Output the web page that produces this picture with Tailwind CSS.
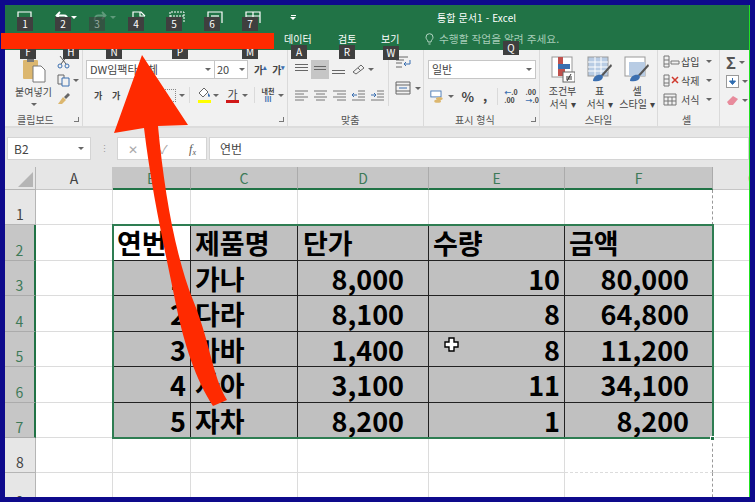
<!DOCTYPE html>
<html lang="ko">
<head>
  <meta charset="UTF-8">
  <title>통합 문서1 - Excel</title>
  <script src="https://cdn.jsdelivr.net/npm/@tailwindcss/browser@4"></script>
</head>
<body class="w-[755px] h-[502px] overflow-hidden bg-[#0e0a8c] font-['Noto_Sans_CJK_KR',sans-serif] text-[#444]">
<div class="relative w-[755px] h-[502px] pl-[5px] pt-[5px] pb-[5px] pr-[5px]">
  <div class="w-[745px] h-[492px] flex flex-col bg-white border-r border-[#22e022] overflow-hidden">

    <!-- Title bar -->
    <header class="h-[45px] shrink-0 bg-[#217346] text-white relative">
      <div class="flex items-start pt-[6px] h-[20px]">
        <svg class="ml-[12px] w-4 h-[12px]" viewBox="0 0 16 12" fill="none" stroke="#fff" stroke-width="1.2"><path d="M1 12V1h13v11"/></svg>
        <svg class="ml-[22px] w-[14px] h-[11px]" viewBox="0 0 14 11" fill="none" stroke="#fff" stroke-width="1.8"><path d="M5 1 1.500 4.500 5 8M2 4.500h7c2.500 0 3.500 2 3.500 5"/></svg>
        <span class="ml-[2px] mt-[5px] w-0 h-0 border-x-[3px] border-x-transparent border-t-[3px] border-t-white"></span>
        <svg class="ml-[16px] w-[14px] h-[11px]" viewBox="0 0 14 11" fill="none" stroke="#5f9a7b" stroke-width="1.8"><path d="M9 1l3.500 3.500L9 8M12 4.500H5c-2.500 0-3.500 2-3.500 5"/></svg>
        <span class="ml-[3px] mt-[5px] w-0 h-0 border-x-[3px] border-x-transparent border-t-[3px] border-t-[#5f9a7b]"></span>
        <svg class="ml-[15px] w-4 h-[12px]" viewBox="0 0 16 12" fill="none" stroke="#fff" stroke-width="1.2"><path d="M2 12V1h8l4 4"/><path d="M9 1v4h5"/></svg>
        <svg class="ml-[22px] w-4 h-[12px]" viewBox="0 0 16 12" fill="none" stroke="#fff" stroke-width="1" stroke-dasharray="2 1"><path d="M1 12V1h14v11"/><path d="M1 5h14"/></svg>
        <svg class="ml-[22px] w-4 h-[12px]" viewBox="0 0 16 12" fill="none" stroke="#fff" stroke-width="1.2"><path d="M1 12V1h14v11"/><path d="M4 5h8"/></svg>
        <svg class="ml-[22px] w-4 h-[12px]" viewBox="0 0 16 12" fill="none" stroke="#fff" stroke-width="1.2"><path d="M1 12V1h14v11M8 1v11M1 5h14"/></svg>
        <span class="ml-[29px] mt-[4px] flex flex-col items-center gap-[1px]"><span class="w-[5px] h-px bg-white"></span><span class="w-0 h-0 border-x-[3px] border-x-transparent border-t-[3px] border-t-white"></span></span>
        <span class="ml-[141px] text-[10px] tracking-[0.1px] leading-[13px] whitespace-nowrap">통합 문서1 - Excel</span>
      </div>
      <nav class="flex items-center h-[25px] pl-[279px] text-[10px] leading-[14px] pt-[3px]">
        <span class="w-[54px]">데이터</span>
        <span class="w-[43px]">검토</span>
        <span class="w-[44px]">보기</span>
        <svg class="w-[9px] h-[13px] mr-[5px]" viewBox="0 0 9 13" fill="none" stroke="#b5d6c4"><path d="M3 9C3 7 1 6.500 1 4.200a3.500 3.500 0 0 1 7 0C8 6.500 6 7 6 9ZM3.500 11h2"/></svg>
        <span class="text-[#a6cdb8] text-[10.7px] whitespace-nowrap">수행할 작업을 알려 주세요.</span>
      </nav>
    </header>

    <!-- Ribbon -->
    <section class="h-[78px] shrink-0 bg-[#f1f1f1] border-b-2 border-[#dcdcdc] flex text-[10px] leading-[13px]">
      <!-- Clipboard -->
      <div class="w-[78px] shrink-0 border-r border-[#dadada] flex flex-col">
        <div class="h-[64px] flex">
          <div class="w-[47px] flex flex-col items-center pl-[10px] pt-[9px]">
            <svg class="w-[24px] h-[24px]" viewBox="0 0 24 24"><rect x="1" y="1" width="15" height="19" rx="1" fill="#dcb76f"/><rect x="5" y="0" width="7" height="3" fill="#777"/><path d="M11 7h8l4 4v12H11Z" fill="#fff" stroke="#777"/></svg>
            <span class="whitespace-nowrap mt-[2px]">붙여넣기</span>
            <span class="mt-[5px] w-0 h-0 border-x-[3px] border-x-transparent border-t-[3px] border-t-[#666]"></span>
          </div>
          <div class="flex flex-col pl-[5px] pt-[5px] gap-[5px]">
            <svg class="w-[13px] h-[14px]" viewBox="0 0 13 14" fill="none" stroke="#555"><path d="M3 1l6 8M10 1 4 9"/><circle cx="3" cy="11" r="2" stroke="#3b6fb0"/><circle cx="10" cy="11" r="2" stroke="#3b6fb0"/></svg>
            <div class="flex items-center gap-[3px]">
              <svg class="w-[13px] h-[13px]" viewBox="0 0 13 13" fill="none" stroke="#666"><path d="M1 1h6v9H1Z"/><path d="M5 4h7v8H5Z" fill="#f1f1f1" stroke="#3b6fb0"/></svg>
              <span class="w-0 h-0 border-x-[3px] border-x-transparent border-t-[3px] border-t-[#666]"></span>
            </div>
            <svg class="w-[13px] h-[13px]" viewBox="0 0 13 13"><path d="M1 12 6 5l3 3-4 4Z" fill="#dcb76f"/><path d="M7 5l4-4 2 2-4 4Z" fill="#666"/></svg>
          </div>
        </div>
        <div class="flex items-center justify-between pl-[12px] pr-[3px] text-[#555]"><span>클립보드</span><span class="w-[5px] h-[5px] border-r border-b border-[#777]"></span></div>
      </div>
      <!-- Font -->
      <div class="w-[205px] shrink-0 border-r border-[#dadada] flex flex-col pl-[3px]">
        <div class="h-[64px] flex flex-col pt-[9px]">
          <div class="flex items-center h-[20px]">
            <div class="w-[129px] h-[19px] bg-white border border-[#c6c6c6] flex items-center justify-between px-[3px] text-[11px]"><span class="whitespace-nowrap">DW임팩타입체</span><span class="w-0 h-0 border-x-[3px] border-x-transparent border-t-[3px] border-t-[#666]"></span></div>
            <div class="w-[33px] h-[19px] bg-white border border-l-0 border-[#c6c6c6] flex items-center justify-between px-[2px] text-[11px]"><span>20</span><span class="w-0 h-0 border-x-[3px] border-x-transparent border-t-[3px] border-t-[#666]"></span></div>
            <span class="ml-[6px] font-bold">가<sup class="text-[#3b6fb0] text-[7px]">▴</sup></span>
            <span class="ml-[5px] font-bold">가<sup class="text-[#3b6fb0] text-[7px]">▾</sup></span>
          </div>
          <div class="flex items-center h-[20px] mt-[6px] text-[9px] font-bold">
            <span class="ml-[8px] w-[18px]">가</span><span class="w-[18px]">가</span><span class="w-[18px]">가</span>
            <span class="ml-[12px] w-[16px] h-[13px] border border-dotted border-[#888]"></span>
            <span class="ml-[3px] w-0 h-0 border-x-[3px] border-x-transparent border-t-[3px] border-t-[#666]"></span>
            <span class="ml-[4px] w-px h-[16px] bg-[#dadada]"></span>
            <svg class="ml-[8px] w-[13px] h-[16px]" viewBox="0 0 13 16"><path d="M6 1 1 6l4 4 5-5Z" fill="#fff" stroke="#666"/><path d="M10 6c1 1 2 2 2 3s-2 1-2 0Z" fill="#3b6fb0"/><rect y="13" width="13" height="3" fill="#ffff00"/></svg>
            <span class="ml-[2px] w-0 h-0 border-x-[3px] border-x-transparent border-t-[3px] border-t-[#666]"></span>
            <span class="ml-[7px] w-[13px] flex flex-col items-center text-[11px] leading-[12px] font-normal">가<span class="w-[13px] h-[3px] bg-[#d01818]"></span></span>
            <span class="ml-[3px] w-0 h-0 border-x-[3px] border-x-transparent border-t-[3px] border-t-[#666]"></span>
            <span class="ml-[6px] w-px h-[16px] bg-[#dadada]"></span>
            <span class="ml-[6px] w-[14px] text-[7px] leading-[8px] text-center whitespace-nowrap">내천<span class="block text-[#3b6fb0]">Ⅲ</span></span>
            <span class="ml-[3px] w-0 h-0 border-x-[3px] border-x-transparent border-t-[3px] border-t-[#666]"></span>
          </div>
        </div>
        <div class="flex items-center justify-end pr-[3px] text-[#555] h-[13px]"><span class="w-[5px] h-[5px] border-r border-b border-[#777]"></span></div>
      </div>
      <!-- Alignment -->
      <div class="w-[136px] shrink-0 border-r border-[#dadada] flex flex-col">
        <div class="h-[64px] flex">
          <div class="w-[100px] pl-[7px] pt-[9px] flex flex-col">
            <div class="flex items-center h-[20px]">
              <svg class="w-[13px] h-[12px] mr-[3px]" viewBox="0 0 13 12" stroke="#666"><path d="M0 1.500h13M0 4.500h13M0 7.500h13" fill="none"/></svg>
              <span class="w-[18px] h-[19px] bg-[#c6c6c6] flex items-center justify-center"><svg class="w-[12px] h-[8px]" viewBox="0 0 12 8" stroke="#666"><path d="M0 1.500h12M0 4.500h12"/></svg></span>
              <svg class="w-[13px] h-[12px] ml-[3px]" viewBox="0 0 13 12" stroke="#666"><path d="M0 7.500h13M0 10.500h13"/></svg>
              <svg class="w-[14px] h-[12px] ml-[7px]" viewBox="0 0 14 12" fill="none" stroke="#666"><path d="M1 9 9 2l3 3-8 6ZM6 5l3 3"/></svg>
              <span class="ml-[2px] w-0 h-0 border-x-[3px] border-x-transparent border-t-[3px] border-t-[#666]"></span>
            </div>
            <div class="flex items-center h-[20px] mt-[6px] gap-[6px]">
              <svg class="w-[13px] h-[11px]" viewBox="0 0 13 11" stroke="#777"><path d="M0 1h13M0 4h9M0 7h13M0 10h9"/></svg>
              <svg class="w-[13px] h-[11px]" viewBox="0 0 13 11" stroke="#777"><path d="M0 1h13M2 4h9M0 7h13M2 10h9"/></svg>
              <svg class="w-[13px] h-[11px]" viewBox="0 0 13 11" stroke="#777"><path d="M0 1h13M4 4h9M0 7h13M4 10h9"/></svg>
              <svg class="w-[13px] h-[11px]" viewBox="0 0 13 11" fill="none" stroke="#777"><path d="M6 1h7M6 4h7M6 7h7M0 10h13"/><path d="M5 5H0M2 3 0 5l2 2" stroke="#3b6fb0"/></svg>
              <svg class="w-[13px] h-[11px]" viewBox="0 0 13 11" fill="none" stroke="#777"><path d="M6 1h7M6 4h7M6 7h7M0 10h13"/><path d="M0 5h5M3 3l2 2-2 2" stroke="#3b6fb0"/></svg>
            </div>
          </div>
          <div class="border-l border-[#dadada] h-[50px] mt-[6px]"></div>
          <div class="pl-[6px] pt-[6px] flex flex-col gap-[12px]">
            <svg class="w-[16px] h-[13px]" viewBox="0 0 16 13" fill="none" stroke="#666"><path d="M1 1h12M1 4h8M1 7h6M1 11h6"/><path d="M15 4v4H9M11 6 9 8l2 2" stroke="#3b6fb0"/></svg>
            <div class="flex items-center gap-[4px]">
              <svg class="w-[16px] h-[14px]" viewBox="0 0 16 14" fill="none" stroke="#666"><path d="M1 1h14v12H1ZM1 4h14M1 10h14"/><path d="M4 7h8" stroke="#3b6fb0"/></svg>
              <span class="w-0 h-0 border-x-[3px] border-x-transparent border-t-[3px] border-t-[#666]"></span>
            </div>
          </div>
        </div>
        <div class="pl-[53px] text-[#555]">맞춤</div>
      </div>
      <!-- Number -->
      <div class="w-[116px] shrink-0 border-r border-[#dadada] flex flex-col pl-[4px]">
        <div class="h-[64px] flex flex-col pt-[10px]">
          <div class="w-[108px] h-[19px] bg-white border border-[#c6c6c6] flex items-center justify-between px-[3px] text-[11px]"><span>일반</span><span class="w-0 h-0 border-x-[3px] border-x-transparent border-t-[3px] border-t-[#666]"></span></div>
          <div class="flex items-center h-[20px] mt-[7px]">
            <svg class="ml-[2px] w-[16px] h-[15px]" viewBox="0 0 16 15"><rect x="1" y="1" width="12" height="7" fill="#fff" stroke="#3b6fb0"/><ellipse cx="11" cy="10" rx="4" ry="2" fill="#dcb76f"/><ellipse cx="9" cy="13" rx="4" ry="2" fill="#dcb76f"/></svg>
            <span class="ml-[4px] w-0 h-0 border-x-[3px] border-x-transparent border-t-[3px] border-t-[#666]"></span>
            <span class="ml-[8px] text-[13px] font-bold">%</span>
            <span class="ml-[9px] text-[13px] font-bold leading-[12px]">,</span>
            <span class="ml-[10px] w-px h-[17px] bg-[#dadada]"></span>
            <span class="ml-[6px] text-[7px] leading-[8px] font-bold whitespace-nowrap"><span class="text-[#3b6fb0]">←</span>.0<br>.00</span>
            <span class="ml-[8px] text-[7px] leading-[8px] font-bold whitespace-nowrap">.00<br><span class="text-[#3b6fb0]">→</span>.0</span>
          </div>
        </div>
        <div class="flex items-center justify-between pl-[27px] pr-[3px] text-[#555]"><span class="whitespace-nowrap">표시 형식</span><span class="w-[5px] h-[5px] border-r border-b border-[#777]"></span></div>
      </div>
      <!-- Styles -->
      <div class="w-[118px] shrink-0 border-r border-[#dadada] flex flex-col">
        <div class="h-[64px] flex pt-[6px] leading-[13px] text-center">
          <div class="w-[37px] ml-[4px] flex flex-col items-center">
            <svg class="w-[24px] h-[27px]" viewBox="0 0 24 27"><rect x="1" y="1" width="20" height="20" fill="#fff" stroke="#999"/><rect x="7" y="1" width="5" height="7" fill="#c0504d"/><rect x="7" y="8" width="12" height="5" fill="#3b6fb0"/><rect x="7" y="13" width="7" height="7" fill="#c0504d"/><rect x="12" y="16" width="12" height="10" fill="#fff" stroke="#666"/><path d="M15 21h6M15 23h6M20 18l-4 7" stroke="#333" fill="none"/></svg>
            <span class="mt-[1px] whitespace-nowrap">조건부</span><span class="whitespace-nowrap">서식 ▾</span>
          </div>
          <div class="w-[37px] flex flex-col items-center">
            <svg class="w-[26px] h-[27px]" viewBox="0 0 26 27"><rect x="1" y="1" width="20" height="19" fill="#b8cce4" stroke="#999"/><path d="M1 6h20M1 11h20M1 15h20M8 1v19M14 1v19" stroke="#fff"/><path d="M14 19 24 8l1 2-9 10Z" fill="#555"/><path d="M6 25c0-4 4-7 9-6l1 2c-1 4-5 5-10 4Z" fill="#3b6fb0"/></svg>
            <span class="mt-[1px]">표</span><span class="whitespace-nowrap">서식 ▾</span>
          </div>
          <div class="w-[38px] flex flex-col items-center">
            <svg class="w-[26px] h-[27px]" viewBox="0 0 26 27"><rect x="1" y="1" width="20" height="19" fill="#fff" stroke="#999"/><rect x="5" y="6" width="16" height="14" fill="#b8cce4"/><path d="M14 19 24 8l1 2-9 10Z" fill="#555"/><path d="M6 25c0-4 4-7 9-6l1 2c-1 4-5 5-10 4Z" fill="#3b6fb0"/></svg>
            <span class="mt-[1px]">셀</span><span class="whitespace-nowrap">스타일 ▾</span>
          </div>
        </div>
        <div class="text-center text-[#555]">스타일</div>
      </div>
      <!-- Cells -->
      <div class="w-[62px] shrink-0 border-r border-[#dadada] flex flex-col pl-[5px]">
        <div class="h-[64px] flex flex-col pt-[5px] gap-[6px]">
          <div class="flex items-center gap-[1px] whitespace-nowrap"><svg class="w-[17px] h-[13px]" viewBox="0 0 17 13" fill="none" stroke="#777"><path d="M1 1h5v11H1ZM1 5h5M1 9h5M8 6h8v3H8Z"/></svg>삽입<span class="ml-[6px] w-0 h-0 border-x-[3px] border-x-transparent border-t-[3px] border-t-[#666]"></span></div>
          <div class="flex items-center gap-[1px] whitespace-nowrap"><svg class="w-[17px] h-[13px]" viewBox="0 0 17 13" fill="none" stroke="#777"><path d="M1 1h5v11H1ZM1 5h5M1 9h5"/><path d="M9 3l6 6M15 3l-6 6" stroke="#d0382c" stroke-width="1.500"/></svg>삭제<span class="ml-[6px] w-0 h-0 border-x-[3px] border-x-transparent border-t-[3px] border-t-[#666]"></span></div>
          <div class="flex items-center gap-[1px] whitespace-nowrap"><svg class="w-[17px] h-[13px]" viewBox="0 0 17 13" fill="none" stroke="#777"><path d="M1 1h12v11H1ZM1 4h12M5 4v8M9 4v8M1 8h12"/></svg>서식<span class="ml-[6px] w-0 h-0 border-x-[3px] border-x-transparent border-t-[3px] border-t-[#666]"></span></div>
        </div>
        <div class="text-center pr-[9px] text-[#555]">셀</div>
      </div>
      <!-- Editing -->
      <div class="flex-1 flex flex-col pl-[6px] pt-[5px] gap-[6px] overflow-hidden">
        <div class="flex items-center gap-[3px]"><span class="text-[16px] leading-[14px] font-bold text-[#555]">Σ</span><span class="w-0 h-0 border-x-[3px] border-x-transparent border-t-[3px] border-t-[#666]"></span></div>
        <div class="flex items-center gap-[3px]"><svg class="w-[13px] h-[13px]" viewBox="0 0 13 13"><rect x=".5" y=".5" width="12" height="12" fill="#fff" stroke="#999"/><path d="M6.500 3v6M3.500 6l3 3.500 3-3.500Z" fill="#2f6cb0" stroke="#2f6cb0"/></svg><span class="w-0 h-0 border-x-[3px] border-x-transparent border-t-[3px] border-t-[#666]"></span></div>
        <div class="flex items-center gap-[3px]"><svg class="w-[13px] h-[12px]" viewBox="0 0 13 12"><path d="M1 8 7 2l5 3-5 6H3Z" fill="#e88b9c"/></svg><span class="w-0 h-0 border-x-[3px] border-x-transparent border-t-[3px] border-t-[#666]"></span></div>
      </div>
    </section>

    <!-- Formula bar -->
    <section class="h-[39px] shrink-0 bg-[#e6e6e6] flex items-center pl-[2px] pt-[2px] text-[12px]">
      <div class="w-[84px] h-[23px] bg-white border border-[#d4d4d4] flex items-center justify-between px-[6px]"><span>B2</span><span class="w-0 h-0 border-x-[3px] border-x-transparent border-t-[3px] border-t-[#666]"></span></div>
      <span class="w-[26px] text-center text-[#999] leading-[10px] text-[9px]">⋮</span>
      <div class="w-[90px] h-[23px] bg-white border border-[#d4d4d4] flex items-center justify-between pl-[10px] pr-[10px] text-[#aaa]"><span>✕</span><span>✓</span><span class="font-['Liberation_Serif',serif] italic text-[#555]">f<sub class="text-[8px]">x</sub></span></div>
      <div class="ml-[2px] flex-1 h-[23px] bg-white border border-[#d4d4d4] flex items-center pl-[10px]">연번</div>
    </section>

    <!-- Sheet -->
    <section class="flex-1 grid grid-cols-[31px_77px_78px_107px_131px_136px_148px_1fr] grid-rows-[23px_35px_36px_35px_36px_35px_36px_35px_35px_35px] overflow-hidden text-[14px] leading-none">
      <div class="bg-[#e6e6e6] border-r border-b border-[#b5b5b5] flex items-end justify-end p-[2px]"><span class="w-0 h-0 border-l-[15px] border-l-transparent border-b-[15px] border-b-[#b5b5b5]"></span></div>
      <div class="bg-[#e6e6e6] border-r border-b border-[#c6c6c6] flex items-center justify-center">A</div>
      <div class="bg-[#c6c6c6] border-r border-[#ababab] border-b-2 border-b-[#217346] flex items-center justify-center text-[#3d7a58]">B</div>
      <div class="bg-[#c6c6c6] border-r border-[#ababab] border-b-2 border-b-[#217346] flex items-center justify-center text-[#3d7a58]">C</div>
      <div class="bg-[#c6c6c6] border-r border-[#ababab] border-b-2 border-b-[#217346] flex items-center justify-center text-[#3d7a58]">D</div>
      <div class="bg-[#c6c6c6] border-r border-[#ababab] border-b-2 border-b-[#217346] flex items-center justify-center text-[#3d7a58]">E</div>
      <div class="bg-[#c6c6c6] border-r border-[#ababab] border-b-2 border-b-[#217346] flex items-center justify-center text-[#3d7a58]">F</div>
      <div class="bg-[#e6e6e6] border-b border-[#c6c6c6] flex items-center pl-[35px] overflow-hidden text-[#777]">G</div>

      <!-- row 1 -->
      <div class="bg-[#e6e6e6] border-r border-b border-[#b5b5b5] flex items-end justify-center pb-[3px]">1</div>
      <div class="border-r border-b border-[#dcdcdc]"></div><div class="border-r border-b border-[#dcdcdc]"></div><div class="border-r border-b border-[#dcdcdc]"></div><div class="border-r border-b border-[#dcdcdc]"></div><div class="border-r border-b border-[#dcdcdc]"></div><div class="border-r border-b border-dashed border-r-[#999] border-b-[#dcdcdc]"></div><div class="border-b border-[#dcdcdc]"></div>

      <!-- row 2 -->
      <div class="bg-[#c6c6c6] border-r-2 border-r-[#217346] border-b border-[#ababab] flex items-end justify-center pb-[3px] text-[#3d7a58]">2</div>
      <div class="border-r border-b border-[#dcdcdc]"></div>
      <div class="bg-white border-r border-b border-[#222] flex items-center pl-[4px] text-[27px] font-bold text-black whitespace-nowrap">연번</div>
      <div class="bg-[#c0c0c0] border-r border-b border-[#222] flex items-center pl-[4px] text-[27px] font-bold text-black whitespace-nowrap">제품명</div>
      <div class="bg-[#c0c0c0] border-r border-b border-[#222] flex items-center pl-[5px] text-[27px] font-bold text-black whitespace-nowrap">단가</div>
      <div class="bg-[#c0c0c0] border-r border-b border-[#222] flex items-center pl-[4px] text-[27px] font-bold text-black whitespace-nowrap">수량</div>
      <div class="bg-[#c0c0c0] border-r border-b border-[#222] flex items-center pl-[4px] text-[27px] font-bold text-black whitespace-nowrap">금액</div>
      <div class="border-b border-[#dcdcdc]"></div>

      <!-- row 3 -->
      <div class="bg-[#c6c6c6] border-r-2 border-r-[#217346] border-b border-[#ababab] flex items-end justify-center pb-[3px] text-[#3d7a58]">3</div>
      <div class="border-r border-b border-[#dcdcdc]"></div>
      <div class="bg-[#c0c0c0] border-r border-b border-[#222] flex items-center justify-end pr-[4px] text-[27px] font-bold text-black">1</div>
      <div class="bg-[#c0c0c0] border-r border-b border-[#222] flex items-center pl-[4px] text-[27px] font-bold text-black whitespace-nowrap">가나</div>
      <div class="bg-[#c0c0c0] border-r border-b border-[#222] flex items-center justify-end pr-[24px] text-[27px] font-bold text-black">8,000</div>
      <div class="bg-[#c0c0c0] border-r border-b border-[#222] flex items-center justify-end pr-[4px] text-[27px] font-bold text-black">10</div>
      <div class="bg-[#c0c0c0] border-r border-b border-[#222] flex items-center justify-end pr-[23px] text-[27px] font-bold text-black">80,000</div>
      <div class="border-b border-[#dcdcdc]"></div>

      <!-- row 4 -->
      <div class="bg-[#c6c6c6] border-r-2 border-r-[#217346] border-b border-[#ababab] flex items-end justify-center pb-[3px] text-[#3d7a58]">4</div>
      <div class="border-r border-b border-[#dcdcdc]"></div>
      <div class="bg-[#c0c0c0] border-r border-b border-[#222] flex items-center justify-end pr-[4px] text-[27px] font-bold text-black">2</div>
      <div class="bg-[#c0c0c0] border-r border-b border-[#222] flex items-center pl-[4px] text-[27px] font-bold text-black whitespace-nowrap">다라</div>
      <div class="bg-[#c0c0c0] border-r border-b border-[#222] flex items-center justify-end pr-[24px] text-[27px] font-bold text-black">8,100</div>
      <div class="bg-[#c0c0c0] border-r border-b border-[#222] flex items-center justify-end pr-[4px] text-[27px] font-bold text-black">8</div>
      <div class="bg-[#c0c0c0] border-r border-b border-[#222] flex items-center justify-end pr-[23px] text-[27px] font-bold text-black">64,800</div>
      <div class="border-b border-[#dcdcdc]"></div>

      <!-- row 5 -->
      <div class="bg-[#c6c6c6] border-r-2 border-r-[#217346] border-b border-[#ababab] flex items-end justify-center pb-[3px] text-[#3d7a58]">5</div>
      <div class="border-r border-b border-[#dcdcdc]"></div>
      <div class="bg-[#c0c0c0] border-r border-b border-[#222] flex items-center justify-end pr-[4px] text-[27px] font-bold text-black">3</div>
      <div class="bg-[#c0c0c0] border-r border-b border-[#222] flex items-center pl-[4px] text-[27px] font-bold text-black whitespace-nowrap">마바</div>
      <div class="bg-[#c0c0c0] border-r border-b border-[#222] flex items-center justify-end pr-[24px] text-[27px] font-bold text-black">1,400</div>
      <div class="bg-[#c0c0c0] border-r border-b border-[#222] flex items-center justify-end pr-[4px] text-[27px] font-bold text-black">8</div>
      <div class="bg-[#c0c0c0] border-r border-b border-[#222] flex items-center justify-end pr-[23px] text-[27px] font-bold text-black">11,200</div>
      <div class="border-b border-[#dcdcdc]"></div>

      <!-- row 6 -->
      <div class="bg-[#c6c6c6] border-r-2 border-r-[#217346] border-b border-[#ababab] flex items-end justify-center pb-[3px] text-[#3d7a58]">6</div>
      <div class="border-r border-b border-[#dcdcdc]"></div>
      <div class="bg-[#c0c0c0] border-r border-b border-[#222] flex items-center justify-end pr-[4px] text-[27px] font-bold text-black">4</div>
      <div class="bg-[#c0c0c0] border-r border-b border-[#222] flex items-center pl-[4px] text-[27px] font-bold text-black whitespace-nowrap">사아</div>
      <div class="bg-[#c0c0c0] border-r border-b border-[#222] flex items-center justify-end pr-[24px] text-[27px] font-bold text-black">3,100</div>
      <div class="bg-[#c0c0c0] border-r border-b border-[#222] flex items-center justify-end pr-[4px] text-[27px] font-bold text-black">11</div>
      <div class="bg-[#c0c0c0] border-r border-b border-[#222] flex items-center justify-end pr-[23px] text-[27px] font-bold text-black">34,100</div>
      <div class="border-b border-[#dcdcdc]"></div>

      <!-- row 7 -->
      <div class="bg-[#c6c6c6] border-r-2 border-r-[#217346] border-b border-[#ababab] flex items-end justify-center pb-[3px] text-[#3d7a58]">7</div>
      <div class="border-r border-b border-[#dcdcdc]"></div>
      <div class="bg-[#c0c0c0] border-r border-b border-[#222] flex items-center justify-end pr-[4px] text-[27px] font-bold text-black">5</div>
      <div class="bg-[#c0c0c0] border-r border-b border-[#222] flex items-center pl-[4px] text-[27px] font-bold text-black whitespace-nowrap">자차</div>
      <div class="bg-[#c0c0c0] border-r border-b border-[#222] flex items-center justify-end pr-[24px] text-[27px] font-bold text-black">8,200</div>
      <div class="bg-[#c0c0c0] border-r border-b border-[#222] flex items-center justify-end pr-[4px] text-[27px] font-bold text-black">1</div>
      <div class="bg-[#c0c0c0] border-r border-b border-[#222] flex items-center justify-end pr-[23px] text-[27px] font-bold text-black">8,200</div>
      <div class="border-b border-[#dcdcdc]"></div>

      <!-- row 8 -->
      <div class="bg-[#e6e6e6] border-r border-b border-[#b5b5b5] flex items-end justify-center pb-[3px]">8</div>
      <div class="border-r border-b border-[#dcdcdc]"></div><div class="border-r border-b border-[#dcdcdc]"></div><div class="border-r border-b border-[#dcdcdc]"></div><div class="border-r border-b border-[#dcdcdc]"></div><div class="border-r border-b border-[#dcdcdc]"></div><div class="border-r border-b border-dashed border-r-[#999] border-b-[#dcdcdc]"></div><div class="border-b border-[#dcdcdc]"></div>

      <!-- row 9 -->
      <div class="bg-[#e6e6e6] border-r border-[#b5b5b5] flex items-end justify-center">9</div>
      <div class="border-r border-[#dcdcdc]"></div><div class="border-r border-[#dcdcdc]"></div><div class="border-r border-[#dcdcdc]"></div><div class="border-r border-[#dcdcdc]"></div><div class="border-r border-[#dcdcdc]"></div><div class="border-r border-dashed border-[#999]"></div><div></div>
    </section>
  </div>

  <!-- Selection outline over the sheet -->
  <div class="absolute left-[112px] top-[224px] w-[602px] h-[215px] border-2 border-[#2e7d52]"></div>
  <span class="absolute left-[710px] top-[436px] w-[5px] h-[5px] bg-[#217346] border border-white"></span>

  <!-- Key tips -->
  <span class="absolute left-[17px] top-[17px] w-[16px] h-[14px] bg-[#3f3f3f] text-white text-[10px] leading-[14px] text-center">1</span>
  <span class="absolute left-[55px] top-[17px] w-[16px] h-[14px] bg-[#3f3f3f] text-white text-[10px] leading-[14px] text-center">2</span>
  <span class="absolute left-[89px] top-[17px] w-[16px] h-[14px] bg-[#3f3f3f]/60 text-white/50 text-[10px] leading-[14px] text-center">3</span>
  <span class="absolute left-[128px] top-[17px] w-[16px] h-[14px] bg-[#3f3f3f] text-white text-[10px] leading-[14px] text-center">4</span>
  <span class="absolute left-[166px] top-[17px] w-[16px] h-[14px] bg-[#3f3f3f] text-white text-[10px] leading-[14px] text-center">5</span>
  <span class="absolute left-[204px] top-[17px] w-[16px] h-[14px] bg-[#3f3f3f] text-white text-[10px] leading-[14px] text-center">6</span>
  <span class="absolute left-[242px] top-[17px] w-[16px] h-[14px] bg-[#3f3f3f] text-white text-[10px] leading-[14px] text-center">7</span>
  <span class="absolute left-[20px] top-[45px] w-[16px] h-[14px] bg-[#3f3f3f] text-white text-[10px] leading-[14px] text-center">F</span>
  <span class="absolute left-[63px] top-[45px] w-[16px] h-[14px] bg-[#3f3f3f] text-white text-[10px] leading-[14px] text-center">H</span>
  <span class="absolute left-[106px] top-[45px] w-[16px] h-[14px] bg-[#3f3f3f] text-white text-[10px] leading-[14px] text-center">N</span>
  <span class="absolute left-[172px] top-[45px] w-[16px] h-[14px] bg-[#3f3f3f] text-white text-[10px] leading-[14px] text-center">P</span>
  <span class="absolute left-[242px] top-[45px] w-[16px] h-[14px] bg-[#3f3f3f] text-white text-[10px] leading-[14px] text-center">M</span>
  <span class="absolute left-[291px] top-[45px] w-[16px] h-[14px] bg-[#3f3f3f] text-white text-[10px] leading-[14px] text-center">A</span>
  <span class="absolute left-[339px] top-[45px] w-[16px] h-[14px] bg-[#3f3f3f] text-white text-[10px] leading-[14px] text-center">R</span>
  <span class="absolute left-[383px] top-[46px] w-[16px] h-[14px] bg-[#3f3f3f] text-white text-[10px] leading-[14px] text-center">W</span>
  <span class="absolute left-[503px] top-[41px] w-[16px] h-[14px] bg-[#3f3f3f] text-white text-[10px] leading-[14px] text-center">Q</span>

  <!-- Cursor -->
  <svg class="absolute left-[444px] top-[337px] w-[15px] h-[15px]" viewBox="0 0 15 15"><path d="M5 1h5v4h4v5h-4v4H5v-4H1V5h4Z" fill="#fff" stroke="#000" stroke-width="1.400"/></svg>

  <!-- Red annotation bar and arrow -->
  <span class="absolute left-[1px] top-[33px] w-[273px] h-[16px] bg-[#ff2a00]"></span>
  <svg class="absolute left-0 top-0 w-[755px] h-[502px]" viewBox="0 0 755 502"><path d="M142 55 188 125 158 126C164 190 175 255 193 300S212 375 227 400L213 406C196 380 184 345 175 300S152 195 144 128L114 133Z" fill="#ff2a00"/></svg>
</div>
</body>
</html>
